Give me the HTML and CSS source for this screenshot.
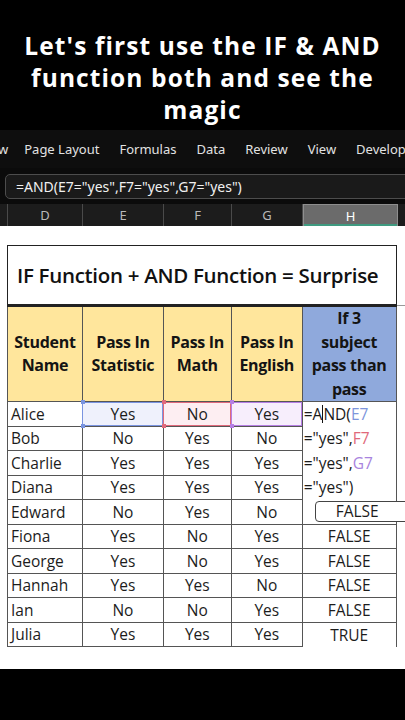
FILE: index.html
```html
<!DOCTYPE html>
<html lang="en">
<head>
    <meta charset="UTF-8">
    <meta name="viewport" content="width=device-width, initial-scale=1.0">
    <title>IF and AND function</title>
    <link rel="stylesheet" href="styles.css">
</head>
<body>
    <h1 class="caption">Let's first use the IF &amp; AND function both and see the magic</h1>

    <div class="ribbon">
        <span class="tab cut">w</span>
        <span class="tab">Page Layout</span>
        <span class="tab">Formulas</span>
        <span class="tab">Data</span>
        <span class="tab">Review</span>
        <span class="tab">View</span>
        <span class="tab">Develop</span>
    </div>

    <div class="formula-row">
        <div class="formula-box">=AND(E7="yes",F7="yes",G7="yes")</div>
    </div>

    <div class="col-heads">
        <div class="col-head edge"></div>
        <div class="col-head" style="width: 75px">D</div>
        <div class="col-head" style="width: 81px">E</div>
        <div class="col-head" style="width: 68px">F</div>
        <div class="col-head" style="width: 71px">G</div>
        <div class="col-head active" style="width: 95px">H</div>
    </div>

    <div class="sheet">
        <table class="grid">
            <colgroup>
                <col style="width: 75px">
                <col style="width: 81px">
                <col style="width: 68px">
                <col style="width: 71px">
                <col style="width: 94px">
                <col style="width: 9px">
            </colgroup>
            <tr class="title-row">
                <td colspan="5" class="title">IF Function + AND Function = Surprise</td>
                <td class="spare"></td>
            </tr>
            <tr class="head-row">
                <th>Student<br>Name</th>
                <th>Pass In<br>Statistic</th>
                <th>Pass In<br>Math</th>
                <th>Pass In<br>English</th>
                <th class="result-head">If 3<br>subject<br>pass than<br>pass</th>
                <td class="spare top"></td>
            </tr>
            <tr>
                <td class="name">Alice</td>
                <td class="ref ref-e">Yes</td>
                <td class="ref ref-f">No</td>
                <td class="ref ref-g">Yes</td>
                <td class="edit">=A<span class="caret"></span>ND(<span class="c-e">E7</span></td>
                <td class="spare"></td>
            </tr>
            <tr>
                <td class="name">Bob</td>
                <td>No</td>
                <td>Yes</td>
                <td>No</td>
                <td class="edit">="yes",<span class="c-f">F7</span></td>
                <td class="spare"></td>
            </tr>
            <tr>
                <td class="name">Charlie</td>
                <td>Yes</td>
                <td>Yes</td>
                <td>Yes</td>
                <td class="edit">="yes",<span class="c-g">G7</span></td>
                <td class="spare"></td>
            </tr>
            <tr>
                <td class="name">Diana</td>
                <td>Yes</td>
                <td>Yes</td>
                <td>Yes</td>
                <td class="edit">="yes")</td>
                <td class="spare"></td>
            </tr>
            <tr>
                <td class="name">Edward</td>
                <td>No</td>
                <td>Yes</td>
                <td>No</td>
                <td class="result tip-cell"><span class="tip">FALSE</span></td>
                <td class="spare"></td>
            </tr>
            <tr>
                <td class="name">Fiona</td>
                <td>Yes</td>
                <td>No</td>
                <td>Yes</td>
                <td class="result">FALSE</td>
                <td class="spare"></td>
            </tr>
            <tr>
                <td class="name">George</td>
                <td>Yes</td>
                <td>No</td>
                <td>Yes</td>
                <td class="result">FALSE</td>
                <td class="spare"></td>
            </tr>
            <tr>
                <td class="name">Hannah</td>
                <td>Yes</td>
                <td>Yes</td>
                <td>No</td>
                <td class="result">FALSE</td>
                <td class="spare"></td>
            </tr>
            <tr>
                <td class="name">Ian</td>
                <td>No</td>
                <td>No</td>
                <td>Yes</td>
                <td class="result">FALSE</td>
                <td class="spare"></td>
            </tr>
            <tr class="last-row">
                <td class="name">Julia</td>
                <td>Yes</td>
                <td>Yes</td>
                <td>Yes</td>
                <td class="result">TRUE</td>
                <td class="spare"></td>
            </tr>
        </table>
    </div>

    <div class="footer"></div>
</body>
</html>
```

FILE: styles.css
```css
body {
    margin: 0;
    background: #000;
    font-family: "Open Sans", "Noto Sans", sans-serif;
    overflow: hidden;
}

/* Video caption on top */
.caption {
    margin: 0;
    height: 130px;
    box-sizing: border-box;
    padding: 30px 14px 0;
    color: #fff;
    font-size: 24.5px;
    font-weight: 700;
    line-height: 32px;
    letter-spacing: 1.1px;
    text-align: center;
}

/* Excel ribbon tabs */
.ribbon {
    height: 38px;
    background: #0e0e0e;
    display: flex;
    align-items: center;
    gap: 20px;
    white-space: nowrap;
    overflow: hidden;
    color: #e2e2e2;
    font-family: "Noto Sans", sans-serif;
    font-size: 13px;
}

.tab.cut {
    margin-left: -2px;
    margin-right: -4px;
}

.formula-row {
    height: 36px;
    background: #0b0b0b;
    display: flex;
    align-items: center;
    padding-left: 5px;
    overflow: hidden;
}

.formula-box {
    flex: 1;
    height: 23px;
    margin-right: -10px;
    border: 1px solid #4d4d4d;
    border-radius: 5px;
    background: #1a1a1a;
    color: #f0f0f0;
    font-family: "Noto Sans", sans-serif;
    font-size: 14px;
    line-height: 23px;
    padding-left: 10px;
    white-space: nowrap;
}

/* Column letters */
.col-heads {
    height: 22px;
    background: #1c1c1c;
    display: flex;
    border-bottom: 2px solid #fff;
    color: #b9b9b9;
    font-family: "Noto Sans", sans-serif;
    font-size: 13px;
}

.col-head {
    box-sizing: border-box;
    border-right: 1px solid #4a4a4a;
    text-align: center;
    line-height: 22px;
    flex-shrink: 0;
}

.col-head.edge {
    width: 8px;
}

.col-head.active {
    background: #6b6b6b;
    color: #fff;
    border-left: 1px solid #8e8e8e;
    border-right: 1px solid #8e8e8e;
    border-top: 1px solid #8e8e8e;
    box-shadow: inset 0 -2px 0 #3f9a80;
}

/* Sheet */
.sheet {
    background: #fff;
    height: 441px;
    padding: 17px 0 0 7px;
    box-sizing: border-box;
}

.grid {
    border-collapse: collapse;
    table-layout: fixed;
    font-family: "Open Sans", "Noto Sans", sans-serif;
    color: #1c1c1c;
}

.grid td,
.grid th {
    border: 1px solid #555;
    padding: 0;
    height: 23.5px;
    font-size: 15.5px;
    font-weight: 400;
    text-align: center;
    line-height: 20px;
    white-space: nowrap;
}

.grid .title-row td.title {
    height: 58px;
    border: 1.5px solid #222;
    border-bottom: 3px solid #222;
    font-size: 20.5px;
    font-weight: 600;
    color: #111;
    text-align: left;
    padding-left: 9px;
    letter-spacing: -0.3px;
}

.head-row th {
    height: 94px;
    background: #ffe69c;
    font-weight: 700;
    font-size: 16px;
    line-height: 23.5px;
    color: #141414;
    letter-spacing: -0.3px;
}

.head-row th.result-head {
    background: #8fa9dc;
}

.grid td.name {
    text-align: left;
    padding-left: 3px;
}

.grid .spare {
    border: none;
    border-left: 1.5px solid #333;
}

.grid .title-row .spare {
    border-left: none;
}

.grid .spare.top {
    border-top: 1px solid #999;
}

/* Alice row: formula range highlights */
.grid td.ref {
    position: relative;
}

.ref-e {
    background: #eff1fc;
    outline: 1.5px solid #7a94e0;
    outline-offset: -1px;
}

.ref-f {
    background: #fdeef2;
    outline: 1.5px solid #e06a7c;
    outline-offset: -1px;
}

.ref-g {
    background: #f7eefc;
    outline: 1.5px solid #b67fe4;
    outline-offset: -1px;
}

.ref::before,
.ref::after {
    content: '';
    position: absolute;
    width: 4px;
    height: 4px;
    left: -2px;
}

.ref::before {
    top: -2px;
}

.ref::after {
    bottom: -2px;
}

.ref-e::before,
.ref-e::after {
    background: #7a94e0;
}

.ref-f::before,
.ref-f::after {
    background: #e06a7c;
}

.ref-g::before,
.ref-g::after {
    background: #b67fe4;
}

/* In-cell formula editing */
.grid td.edit {
    text-align: left;
    padding-left: 1px;
    border-top: none;
    border-bottom: none;
    border-left: 1px solid #999;
    background: #fff;
    font-size: 15.5px;
    color: #1a1a1a;
}

.caret {
    display: inline-block;
    width: 1px;
    height: 18px;
    background: #111;
    vertical-align: -3px;
}

.c-e {
    color: #7d95dc;
}

.c-f {
    color: #e0697a;
}

.c-g {
    color: #a883de;
}

.grid td.result {
    border-left: 1px solid #999;
}

.grid td.tip-cell {
    position: relative;
    border-top: none;
}

.tip {
    position: absolute;
    top: 1px;
    left: 12px;
    width: 100px;
    height: 19px;
    border: 1.5px solid #444;
    border-radius: 4px;
    background: #fff;
    line-height: 19px;
    padding-left: 20px;
    text-align: left;
}

.grid .last-row td.result {
    border-bottom: none;
}

.footer {
    height: 60px;
    background: #000;
}
```
